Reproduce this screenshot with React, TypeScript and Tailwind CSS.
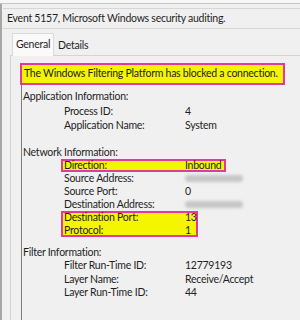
type Row = { label: string; value?: string; blur?: boolean };

const appRows: Row[] = [
  { label: "Process ID:", value: "4" },
  { label: "Application Name:", value: "System" },
];

const filterRows: Row[] = [
  { label: "Filter Run-Time ID:", value: "12779193" },
  { label: "Layer Name:", value: "Receive/Accept" },
  { label: "Layer Run-Time ID:", value: "44" },
];

function BlurredValue() {
  return (
    <span className="inline-block h-[7px] w-[58px] rounded-sm bg-[#c6c6c6] blur-[1.5px]" />
  );
}

function DetailRow({ label, value, blur, h }: Row & { h: string }) {
  return (
    <div className={`flex items-center ${h}`}>
      <span className="w-[121px] shrink-0">{label}</span>
      {blur ? <BlurredValue /> : <span>{value}</span>}
    </div>
  );
}

function Section({ title, h }: { title: string; h: string }) {
  return <div className={`flex items-center pl-[1px] ${h}`}>{title}</div>;
}

function Marked({ width, rows, h }: { width: string; rows: Row[]; h: string }) {
  return (
    <div className={`ml-[39px] ring-2 ring-inset ring-[#e4399a] bg-[#f5f500] pl-[3px] ${width}`}>
      {rows.map((r) => (
        <DetailRow key={r.label} h={h} {...r} />
      ))}
    </div>
  );
}

function Plain({ rows, h }: { rows: Row[]; h: string }) {
  return (
    <div className="ml-[42px]">
      {rows.map((r) => (
        <DetailRow key={r.label} h={h} {...r} />
      ))}
    </div>
  );
}

export default function App() {
  return (
    <div className="w-[300px] h-[320px] overflow-hidden bg-[#f0f0f0] text-[#1f1f1f] text-[10.5px] tracking-[-0.25px] font-['Lato',sans-serif] flex flex-col">
      <div className="h-[4px] shrink-0 bg-[#f7f7f7] border-b border-[#c4c4c4]" />
      <div className="flex flex-1">
        <div className="w-[2px] bg-[#a6a6a6] shrink-0" />
        <div className="flex-1 flex flex-col pl-[1px]">
          <div className="mt-[4px] h-[21px] border-t border-b border-[#d6d6d6] flex items-center pl-[4px]">
            Event 5157, Microsoft Windows security auditing.
          </div>
          <div className="flex-1 flex flex-col pl-[7px] pt-[4px]">
            <div className="flex h-[23px] items-stretch relative z-10">
              <div className="w-[42px] ml-[2px] bg-[#fafafa] border border-b-0 border-[#d9d9d9] flex items-center justify-center">
                General
              </div>
              <div className="px-[4px] flex items-center pt-[3px]">Details</div>
            </div>
            <div className="flex-1 border-t border-l border-[#d4d4d4] pl-[10px] pt-[6px] -mt-[1px]">
              <div className="h-full border-l border-[#7d7d7d]">
                <div className="-ml-[2px] mt-[1px] h-[22px] border-2 border-[#e4399a] bg-[#f5f500] flex items-center pl-[2px] w-[265px] whitespace-nowrap">
                  The Windows Filtering Platform has blocked a connection.
                </div>
                <div className="h-[5px]" />
                <Section title="Application Information:" h="h-[13.5px]" />
                <div className="h-[1.5px]" />
                <Plain rows={appRows} h="h-[14px]" />
                <div className="h-[13px]" />
                <Section title="Network Information:" h="h-[13px]" />
                <Marked
                  width="w-[165px]"
                  h="h-[13px]"
                  rows={[{ label: "Direction:", value: "Inbound" }]}
                />
                <Plain
                  h="h-[13px]"
                  rows={[
                    { label: "Source Address:", blur: true },
                    { label: "Source Port:", value: "0" },
                    { label: "Destination Address:", blur: true },
                  ]}
                />
                <Marked
                  width="w-[137px]"
                  h="h-[13px]"
                  rows={[
                    { label: "Destination Port:", value: "13" },
                    { label: "Protocol:", value: "1" },
                  ]}
                />
                <div className="h-[9px]" />
                <Section title="Filter Information:" h="h-[13.5px]" />
                <Plain rows={filterRows} h="h-[13.5px]" />
              </div>
            </div>
          </div>
        </div>
      </div>
    </div>
  );
}
